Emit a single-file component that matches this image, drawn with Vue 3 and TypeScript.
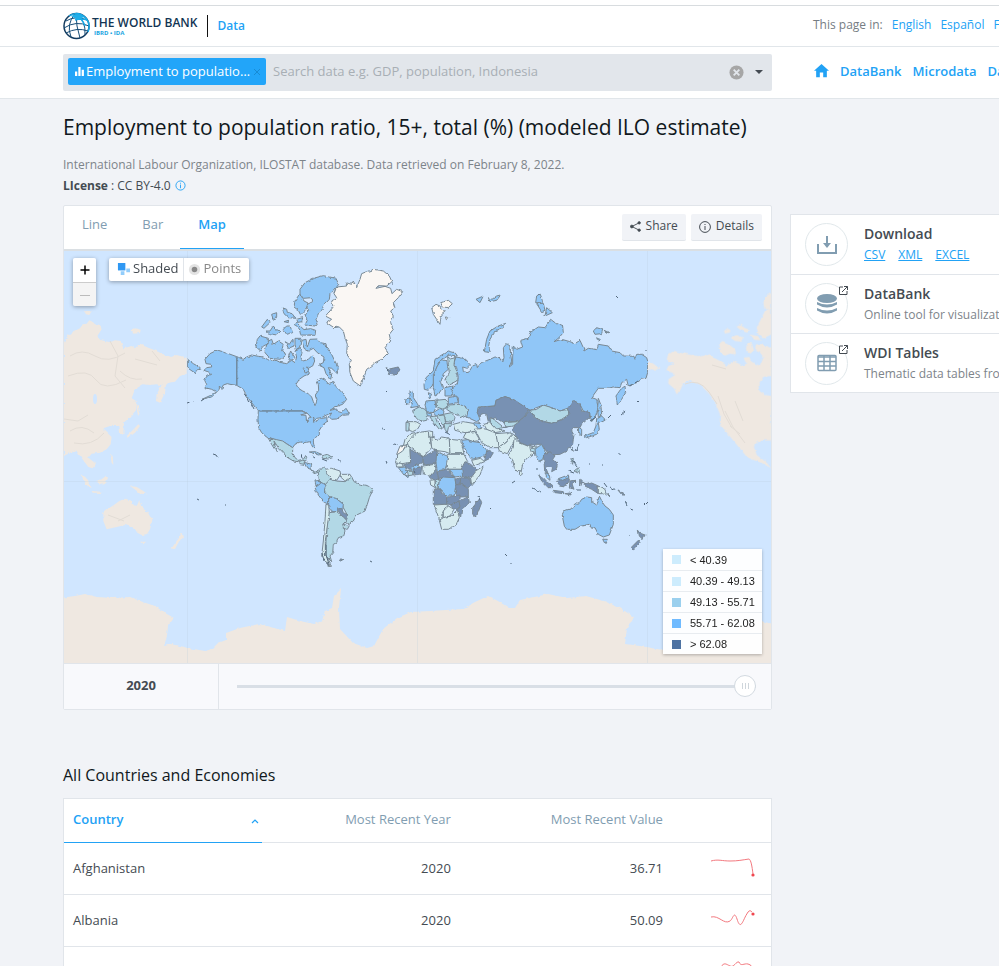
<script setup lang="ts">
import { ref } from 'vue'

type Tone = 'blue' | 'cyan' | 'pale' | 'dark' | 'none' | 'land'
type Shape = [Tone, string]
interface Sheet { id: string; at: string; shapes: Shape[] }

const year = ref(2020)
const tab = ref('Map')
const tabs = ['Line', 'Bar', 'Map']
const query = ref('')
const languages = ['English', 'Español', 'Français', 'العربية']
const sites = ['DataBank', 'Microdata', 'Data Catalog']
const formats = ['CSV', 'XML', 'EXCEL']

const legend: { tone: string; label: string }[] = [
  { tone: 'l1', label: '< 40.39' },
  { tone: 'l1', label: '40.39 - 49.13' },
  { tone: 'l2', label: '49.13 - 55.71' },
  { tone: 'l3', label: '55.71 - 62.08' },
  { tone: 'l4', label: '> 62.08' }
]

const rows = [
  { name: 'Afghanistan', year: 2020, value: '36.71', line: 'M1 7C8 5 12 7 20 7S32 6 39 5C41 6 42 12 43 20', x: 43, y: 21 },
  { name: 'Albania', year: 2020, value: '50.09', line: 'M1 11C9 9 14 19 20 15C23 13 24 4 27 13C31 26 33 13 38 6Q40 3 42 6', x: 43, y: 8 },
  { name: 'Algeria', year: 2020, value: '36.66', line: 'M11 9C14 4 16 6 20 8C24 10 26 3 29 4C31 9 34 5 38 6Q41 6 42 10', x: 43, y: 14 }
]

/* Sheets of the projected world; each is drawn at three units per map pixel. */
const backdrop: Sheet[] = [
  { id: 'west', at: 'translate(60 310) scale(.3333)', shapes: [
    ['land', '12,95 20,78 40,62 60,52 68,40 80,38 88,28 98,32 105,40 120,42 125,55 112,75 125,88 150,94 165,88 182,90 190,112 215,105 225,112 238,98 265,110 285,118 300,125 330,138 350,132 380,140 380,188 360,195 345,212 325,215 318,222 315,245 300,275 288,270 290,250 305,222 285,220 270,222 250,220 225,235 215,262 232,272 228,298 205,325 192,338 190,370 180,365 178,345 150,345 130,352 155,375 152,400 140,415 120,425 95,428 85,440 108,458 98,472 85,468 70,448 58,432 48,418 30,425 12,435'],
    ['land', '130,605 142,595 165,580 178,570 195,563 212,568 215,578 230,585 238,568 245,590 262,602 277,628 270,655 262,668 245,672 232,665 222,650 195,642 170,648 140,655 130,630'],
    ['land', '335,712 350,690 362,672 360,664 372,672 358,690 345,714'], ['land', '210,525 230,528 250,540 262,550 240,548 228,538'],
    ['land', '112,510 125,505 138,494 144,500 136,518 120,522'], ['land', '65,490 78,500 95,530 85,528 70,508'], ['land', '95,540 125,542 128,546 98,545'],
    ['land', '215,60 225,52 242,56 240,66 220,68'], ['land', '200,375 218,358 235,340 240,345 225,365 205,380'], ['land', '235,275 240,305 234,315 230,290'],
    ['land', '72,0 95,0 88,12 78,10'], ['land', '240,692 258,692 250,700'], ['land', '150,428 158,435 160,462 155,455']
  ] },
  { id: 'east', at: 'translate(600 310) scale(.3333)', shapes: [
    ['land', '200,145 205,130 222,120 240,124 265,130 300,136 330,130 345,142 365,152 380,165 400,150 430,165 450,150 480,165 490,140 514,130 514,195 490,198 475,220 478,240 495,252 514,255 514,388 490,388 470,395 462,405 470,432 500,455 514,472 490,458 465,448 440,438 430,425 405,395 378,362 360,340 360,310 352,290 340,265 325,245 300,222 270,210 250,215 242,235 230,250 222,232 205,218 205,205 225,192 215,184 198,180 205,165 220,160'],
    ['land', '358,98 368,90 385,98 405,115 408,130 390,128 375,134 362,125'], ['land', '372,60 385,50 392,62 375,68'], ['land', '392,80 410,72 430,80 425,92 405,90'],
    ['land', '410,48 425,38 432,50 446,55 442,65 425,60'], ['land', '440,98 455,96 462,120 450,128 438,115'], ['land', '468,100 488,98 514,112 514,145 490,138 480,125 465,118'],
    ['land', '470,50 480,30 495,0 514,-10 514,70 490,82 475,70'], ['land', '490,-25 500,-45 514,-55 514,-8 494,-5'], ['land', '143,150 160,158 178,172 160,180 143,172'], ['land', '430,140 448,138 455,155 438,155'],
    ['land', '452,70 475,76 482,88 462,86']
  ] }
]

const world: Sheet[] = [
  { id: 'north-america', at: 'translate(180 250) scale(.3333)', shapes: [
    ['blue', '75,325 90,308 112,297 140,306 170,317 170,403 150,400 142,398 130,402 125,412 118,405 118,415 108,425 95,438 78,442 66,445 90,434 108,422 95,415 75,410 80,400 74,388 80,376 95,370 88,364 72,358 80,350 95,348 94,340 78,338'],
    ['blue', '22,324 32,332 40,338 52,345 62,355 50,357 48,368 36,360 22,350'],
    ['blue', '170,317 190,325 200,318 215,312 235,316 250,318 262,325 275,332 285,326 300,334 320,338 335,328 345,335 350,318 345,300 360,290 366,305 362,320 370,330 385,325 392,318 400,315 404,330 398,345 385,352 388,368 372,375 358,385 348,400 355,412 368,420 385,428 395,438 400,452 405,464 411,445 406,432 416,418 415,400 410,388 424,382 436,388 445,398 462,392 466,405 480,418 490,430 500,445 488,460 465,468 450,478 470,474 475,482 485,485 498,472 508,488 490,490 470,504 455,505 448,498 455,486 440,492 425,500 410,502 398,514 402,502 392,498 380,485 365,480 235,480 225,468 215,455 200,435 190,415 170,403'],
    ['blue', '235,480 365,480 380,487 362,492 378,493 380,515 388,498 402,500 400,514 425,502 440,500 443,510 428,522 418,538 418,548 405,562 400,570 404,592 398,588 390,572 375,575 360,573 345,580 338,590 320,578 308,572 290,568 275,562 262,560 245,545 236,530 234,505'],
    ['cyan', '264,560 290,566 308,570 322,580 338,590 338,605 345,620 355,628 370,625 378,613 380,620 375,628 368,635 355,632 340,630 320,618 310,605 295,590 282,570 285,585 292,602 282,592 272,575'],
    ['cyan', '355,632 368,628 375,630 372,640 360,638'], ['blue', '372,634 395,640 392,655 380,650'], ['cyan', '392,655 402,664 418,656 422,662 402,668'],
    ['blue', '388,603 405,602 425,610 415,612 400,606'], ['cyan', '425,615 442,610 458,620 445,624 428,622'],
    ['none', '470,108 500,105 498,95 515,100 520,90 530,110 540,85 545,68 560,62 580,55 610,60 628,75 636,92 620,105 595,104 588,112 615,106 632,112 636,128 650,115 668,122 655,140 640,155 645,170 632,180 640,195 632,215 640,235 628,250 632,270 615,290 625,305 605,325 585,335 575,345 560,355 552,380 541,405 520,390 510,365 508,340 514,328 500,310 502,280 495,260 490,240 478,228 462,230 440,215 455,205 436,195 450,180 462,165 455,150 470,140 462,128'],
    ['blue', '360,115 375,95 400,82 430,74 468,82 476,100 465,115 450,130 448,145 430,165 425,180 415,188 408,205 412,215 405,225 375,222 382,208 375,190 386,178 378,162 398,152 396,140 370,142 360,130'],
    ['blue', '345,150 360,127 372,150 384,156 378,175 362,192 355,178 342,168'], ['blue', '345,220 352,217 372,236 392,233 407,238 405,253 362,252 358,234'],
    ['blue', '258,290 262,272 275,265 280,280 295,270 310,280 305,300 318,310 300,325 270,322 255,305'], ['blue', '232,265 240,255 265,262 265,278 250,285 240,298 228,288'],
    ['blue', '345,262 364,262 360,285 350,300 345,280'], ['blue', '316,272 328,280 338,265 342,285 325,292'], ['blue', '325,318 332,300 345,320 332,328'],
    ['blue', '258,240 270,240 280,225 290,238 303,240 290,252 268,248'], ['blue', '245,228 262,205 270,215 252,232'], ['blue', '307,170 320,175 322,184 336,188 348,202 325,200 312,188'],
    ['blue', '310,235 320,225 330,225 338,245 320,250'], ['blue', '275,190 290,185 290,200 278,205'], ['blue', '312,212 325,208 325,215'], ['blue', '350,205 368,200 366,212 354,214'],
    ['blue', '366,268 378,265 382,288 390,265 412,264 420,275 438,278 440,290 455,310 462,325 475,350 472,368 455,352 445,350 455,372 452,385 438,368 432,350 415,342 430,335 432,318 412,305 400,292 385,300 372,292'],
    ['blue', '368,352 382,348 388,360 376,366'], ['dark', '618,350 628,354 655,348 660,358 645,372 625,370 628,362'],
    ['blue', '676,460 678,444 690,440 690,458'], ['blue', '690,418 700,425 700,440 712,458 716,466 692,470 698,455 690,440']
  ] },
  { id: 'eurasia', at: 'translate(380 250) scale(.3333)', shapes: [
    ['blue', '228,318 250,322 272,342 262,352 248,348 250,362 265,365 278,345 290,340 292,350 304,335 330,325 345,318 358,320 368,335 372,320 370,290 380,278 390,285 392,310 395,330 388,348 398,340 398,318 400,285 410,295 428,288 422,268 445,262 450,245 475,228 495,230 512,205 525,215 548,225 550,245 535,262 522,272 545,265 570,272 585,278 600,268 610,290 612,300 625,292 650,296 655,280 685,285 695,300 720,305 730,315 762,316 765,325 770,310 785,310 800,320 803,330 803,365 798,382 785,385 770,395 745,405 740,385 725,395 720,410 700,408 680,412 655,412 635,440 650,445 655,470 645,500 635,512 628,485 610,480 600,460 580,448 568,470 540,480 490,462 450,478 430,470 400,445 375,437 348,448 345,465 295,468 292,485 300,505 290,512 260,498 265,475 240,462 235,455 235,440 215,430 218,410 232,400 235,380 230,350 222,335'],
    ['blue', '708,435 722,415 735,405 737,425 725,445 712,462'],
    ['blue', '132,400 138,380 160,360 165,325 185,312 205,300 225,305 232,315 210,312 195,320 180,330 170,350 162,375 160,400 145,418 133,415'],
    ['blue', '160,372 172,345 185,325 200,330 205,355 190,368 182,395 188,410 175,430 165,435 160,410'],
    ['cyan', '203,318 212,324 225,318 222,340 232,365 230,390 205,402 195,385 208,365 205,340'],
    ['dark', '295,470 345,465 348,448 375,437 400,445 450,478 430,500 415,512 390,512 370,515 345,500 325,512 320,490 305,488 300,498 292,485'],
    ['cyan', '450,478 470,475 490,462 515,470 540,480 562,475 570,488 545,505 515,517 480,508 462,495'],
    ['dark', '450,478 462,497 480,510 515,517 550,505 570,488 562,474 580,448 600,460 605,480 630,485 628,500 605,520 600,530 580,530 575,540 582,552 580,565 578,580 560,600 540,610 515,612 500,602 485,580 465,580 445,585 420,575 410,558 398,538 405,520 430,500'],
    ['blue', '313,302 320,265 330,240 355,225 377,217 370,230 345,240 330,265 325,290 332,305'],
    ['blue', '467,155 470,135 480,128 487,145 487,155'], ['blue', '470,158 490,157 495,178 485,182'], ['blue', '495,195 500,170 517,185'],
    ['blue', '640,240 650,230 668,236 665,248 645,250'], ['blue', '672,238 690,246 680,244'], ['blue', '650,260 660,268 654,270'],
    ['blue', '288,145 310,135 300,155'], ['blue', '325,140 336,145 350,135 362,132 350,148 330,152'],
    ['none', '155,170 168,160 180,165 185,175 196,182 184,192 180,220 170,205 160,190'], ['none', '182,155 205,148 217,158 205,170 188,168'], ['none', '195,195 206,200 200,208'],
    ['blue', '655,442 662,460 665,490 655,500 653,470'], ['blue', '650,505 665,495 675,505 655,515 658,535 650,550 620,560 612,555 640,545 648,525'], ['blue', '595,528 605,535 605,552 597,552'],
    ['cyan', '98,478 118,468 135,475 145,490 140,508 120,512 108,500'], ['pale', '80,512 108,512 122,520 112,535 98,542 88,538'], ['cyan', '78,514 88,516 86,540 78,540'],
    ['blue', '138,450 165,448 168,470 160,485 140,482 135,465'], ['cyan', '168,448 198,445 205,468 190,475 170,468'], ['blue', '145,425 155,430 148,442'],
    ['blue', '195,410 218,405 215,435 195,435'], ['blue', '205,440 230,435 235,455 205,460'], ['cyan', '205,462 240,460 265,475 262,490 240,500 235,490 215,485 200,475'],
    ['cyan', '190,490 215,485 225,500 220,515 198,512'], ['cyan', '150,498 165,495 172,515 190,530 178,535 160,512'], ['cyan', '170,495 192,492 198,518 185,518'], ['cyan', '192,518 215,518 205,530 202,545 195,535'],
    ['blue', '160,485 180,472 192,480 190,490 168,495'], ['blue', '140,485 155,488 155,496 142,494'],
    ['pale', '220,520 250,512 285,518 300,525 290,540 255,545 225,538'], ['blue', '282,515 302,518 306,532 292,530'],
    ['pale', '258,545 285,542 300,568 278,572 250,560'], ['blue', '245,568 262,566 280,572 300,575 318,595 325,605 305,618 275,625 262,605 250,585'],
    ['pale', '285,535 305,532 345,540 352,565 355,590 330,590 305,575'], ['pale', '312,520 330,515 350,530 375,540 345,545 320,535'], ['cyan', '330,500 350,512 372,530 392,525 350,534 332,515'],
    ['pale', '348,548 385,545 398,548 375,575 355,590'], ['pale', '355,590 375,575 400,550 410,560 392,590 382,608 358,600'], ['cyan', '372,515 418,512 400,525 378,528'],
    ['pale', '385,612 400,590 402,560 418,575 450,588 470,585 478,598 462,608 440,622 428,640 424,660 412,662 403,650 397,625'], ['pale', '420,662 428,668 422,674 418,670'],
    ['cyan', '450,592 465,592 466,606 454,604']
  ] },
  { id: 'africa', at: 'translate(380 400) scale(.3333)', shapes: [
    ['pale', '75,115 90,98 105,95 108,108 82,130 70,135'], ['none', '60,135 78,132 68,150 60,160 50,160'], ['pale', '82,125 110,95 148,90 150,110 155,140 130,167 85,135'],
    ['pale', '148,90 158,92 158,108 150,110'], ['pale', '152,108 175,115 185,108 208,112 210,158 195,152 165,148 155,140'], ['pale', '208,115 240,118 245,128 252,158 210,158'],
    ['pale', '48,182 50,162 68,150 80,132 90,140 92,184 66,188'], ['dark', '90,145 130,168 128,185 105,195 88,205 70,192 92,186'], ['dark', '130,168 165,148 172,155 168,188 130,192'],
    ['blue', '170,152 204,166 202,185 195,205 172,210 168,185'], ['pale', '205,160 252,160 262,180 250,205 205,205 200,185'],
    ['dark', '255,182 272,190 292,208 280,225 255,232 240,212'], ['pale', '290,208 310,195 300,222 275,252 272,232'], ['blue', '205,205 245,205 248,225 225,228'],
    ['dark', '172,212 200,205 222,228 175,232'], ['pale', '128,195 165,190 168,205 150,225 130,222'], ['dark', '148,228 168,205 176,234 158,238'], ['blue', '90,204 112,190 120,200 98,208'],
    ['pale', '48,185 66,188 70,198 50,198'], ['blue', '55,200 76,198 82,212 72,222'], ['blue', '72,220 86,226 84,230'], ['cyan', '82,208 98,208 98,222 85,224'], ['dark', '100,202 125,198 122,222 102,225'],
    ['pale', '150,238 165,236 166,260 152,252'], ['cyan', '166,236 178,234 176,260 166,262'], ['blue', '178,238 190,228 225,230 228,250 222,285 200,285 180,265 175,260'],
    ['dark', '242,230 270,232 272,250 265,262 240,248'], ['dark', '225,235 242,230 240,248 228,252'], ['dark', '228,252 245,250 265,265 265,287 240,288 226,275'], ['dark', '160,265 180,265 188,280 200,285 200,310 160,310'],
    ['dark', '200,290 222,285 240,282 240,298 215,312 200,308'], ['dark', '265,287 268,305 245,325 242,348 232,332 240,300'], ['dark', '212,312 235,300 240,315 232,326 220,322'],
    ['pale', '162,312 195,310 205,312 190,330 188,358 178,355'], ['pale', '190,330 205,315 222,325 210,345 190,350'], ['pale', '178,358 190,350 215,345 232,330 238,350 228,372 205,385 185,385'],
    ['dark', '278,320 300,292 305,305 290,345 278,340'], ['pale', '275,178 302,172 314,182 282,195'], ['dark', '320,150 328,148 340,155 330,172 314,180']
  ] },
  { id: 'south-america', at: 'translate(290 440) scale(.3333)', shapes: [
    ['cyan', '85,95 100,78 108,85 112,100 122,112 118,125 105,135 88,118'], ['pale', '105,85 125,82 150,90 152,100 140,118 120,112 110,98'], ['pale', '150,100 180,100 188,115 165,120 152,108'],
    ['blue', '75,120 90,118 92,130 78,138'], ['cyan', '102,135 120,115 140,120 165,122 185,108 192,122 212,130 235,135 248,148 238,170 232,190 225,210 200,222 190,240 178,250 165,240 172,222 160,200 155,185 140,175 120,165 105,155'],
    ['blue', '75,140 95,125 108,132 102,150 118,165 115,190 100,182 85,162'], ['blue', '116,168 138,172 160,190 158,205 140,212 125,212 116,190'], ['dark', '142,205 155,202 160,215 174,222 170,236 155,225'],
    ['pale', '108,190 116,192 118,220 112,260 106,300 106,340 122,368 105,362 95,345 100,300 105,240'],
    ['cyan', '118,215 140,212 160,228 170,238 158,250 165,270 160,285 145,290 140,305 130,310 128,335 120,345 125,362 108,345 108,300 112,255'], ['cyan', '160,248 178,254 172,265 160,262'],
    ['pale', '112,365 125,375 115,378'], ['dark', '148,358 155,354 162,354 152,360']
  ] },
  { id: 'oceania', at: 'translate(500 380) scale(.3333)', shapes: [
    ['blue', '187,400 192,390 215,382 225,368 235,370 245,355 260,348 275,350 275,362 290,372 298,345 308,365 315,375 328,385 340,402 340,430 328,462 310,468 295,460 285,440 275,442 268,430 240,436 225,445 200,445 193,435 188,410'],
    ['blue', '308,475 322,475 315,488'], ['dark', '415,447 424,458 435,462 428,475 418,465'], ['dark', '393,500 415,478 420,485 400,508'],
    ['dark', '115,280 130,290 158,320 145,320 125,300'], ['dark', '160,328 190,332 192,338 165,335'], ['dark', '170,298 190,295 205,285 208,300 195,318 178,315'], ['blue', '175,293 205,282 206,290 188,298'],
    ['blue', '135,275 148,280 150,298 140,290'], ['dark', '210,300 228,298 216,308 222,325 212,318 208,322'], ['dark', '250,305 262,310 275,306 295,315 295,338 275,325 255,315'], ['pale', '295,315 315,325 318,335 330,345 308,338 295,338'],
    ['blue', '105,205 125,190 135,210 128,235 118,240 108,225'], ['dark', '130,220 150,212 165,225 158,235 172,250 168,265 155,272 158,258 145,255 138,262 145,280 134,270 132,240'],
    ['cyan', '210,235 220,232 218,250'], ['cyan', '222,270 235,260 238,278'], ['dark', '195,338 215,336 212,342'], ['dark', '242,295 248,300 242,315'], ['dark', '352,325 375,342 366,342'], ['dark', '218,200 220,214 216,212']
  ] }
]

/* Thin strokes that stand for archipelagos too small to fill. */
const specks = 'M187 403l3-1M193 402l2-1M201 400l3-2M213 453l3 1l2 3M197 498l2 1M225 504l1 0M244 392l3 5l2 5M250 400l4 8M382 427l2 1M394 443l4 1M386 460l1 2M387 367l1 2M301 454l1 3M338 458l2 3M322 458l5 2M326 544l0 10l3 9M322 552l2 8l6 5M370 560l2 1M505 553l2 2M511 562l1 0M589 463l1 0M602 464l1 0M619 453l2 0M630 534l0 1M625 501l2 4M630 508l3 1M644 504l3-3M610 486l5 3M604 482l3 4M570 458l4 3l3 4M568 470l6 2M577 489l4 0M541 491l-8-4M537 467l0 2M392 282l1 0M539 293l0 1M630 385l8-5M646 349l0 1M638 400l1 1M573 449l0-3M414 470l1 2M626 410l-5 4M490 507l1 1M478 495l2 4M596 416l-6 4M515 480l-3 2M386 462l1 0M608 417l3-3M576 450l3-6M616 295l2 2M387 390l-1 1M315 457l-3-2M445 431l4 2M439 422l3 3M435 425l-2-3'
const relief = 'M70 355q12-8 25 0t30-3M68 375q20-8 28 4t30 0M110 340l8 15l-3 20l10 12M74 442q18 4 30-10M64 418l14 2l10-6M70 430q12-8 24 2M120 370q10 10 22 8M135 358l22 6M152 350l8 10M685 383q14-6 24 8l8 12M718 395l6 18l8 14M725 410l8 16l12 16M730 425l10 8M735 400l8 20M712 364l14 4M108 514l16 6M118 520l12-6'
</script>

<template>
  <div class="page">
    <header class="masthead">
      <div class="brand">
        <a class="logo" href="#home" aria-label="The World Bank">
          <svg class="globe" viewBox="0 0 28 28" fill="none">
            <circle cx="13.500" cy="14" r="12.500" stroke="#123a5e" stroke-width="1.500" />
            <path d="M3 9Q13 3 24 8M1 16Q13 8 26 14M3 21Q14 15 25 19M12 2Q3 12 8 25M13 2Q13 14 17 26M13 2Q23 8 22 23" stroke="#174d77" />
            <path d="M6 4Q15-2 23 6Q28 12 25 20M13 2L22 5M13 2Q20 8 22 14M12 8Q19 6 24 8" stroke="#18a9e6" stroke-width="1.500" />
            <path d="M8 4Q15 0 21 5L15 8Z" fill="#21aee8" />
          </svg>
          <span class="wordmark"><strong>THE WORLD BANK</strong><small>IBRD • IDA</small></span>
        </a>
        <a class="data-link" href="#data">Data</a>
      </div>
      <nav class="languages" aria-label="Languages">
        <span>This page in:</span>
        <a v-for="l in languages" :key="l" href="#lang">{{ l }}</a>
      </nav>
    </header>

    <div class="searchbar">
      <form class="search" @submit.prevent>
        <span class="chip">
          <svg class="bars" viewBox="0 0 10 10" fill="#fff"><path d="M0 5h2.500v5H0zM3.700 0h2.500v10H3.700zM7.400 3h2.500v7H7.400z" /></svg>
          <span class="chip-text">Employment to population ratio, 15+, total (%)</span>
          <button type="button" class="chip-x" aria-label="Remove indicator"><svg viewBox="0 0 8 8"><path d="M1 1l6 6M7 1l-6 6" stroke="#178bd5" /></svg></button>
        </span>
        <input v-model="query" class="query" aria-label="Search data" placeholder="Search data e.g. GDP, population, Indonesia" />
        <button type="button" class="clear" aria-label="Clear">
          <svg viewBox="0 0 16 16"><circle cx="8" cy="8" r="7.500" fill="#a6a6a6" /><path d="M5 5l6 6M11 5l-6 6" stroke="#e2e6eb" stroke-width="2" /></svg>
        </button>
        <button type="button" class="drop" aria-label="Open list"><svg viewBox="0 0 8 5"><path d="M0 0h8L4 4z" fill="#444b52" /></svg></button>
      </form>
      <nav class="sites" aria-label="Sites">
        <a href="#home" class="home" aria-label="Home"><svg viewBox="0 0 16 14"><path d="M8 0l8 7.200h-2.300V14H9.800V9H6.200v5H2.300V7.200H0z" fill="#22a2f5" /></svg></a>
        <a v-for="s in sites" :key="s" href="#site">{{ s }}</a>
      </nav>
    </div>

    <div class="content">
      <main>
        <h1>Employment to population ratio, 15+, total (%) (modeled ILO estimate)</h1>
        <p class="source">International Labour Organization, ILOSTAT database. Data retrieved on February 8, 2022.</p>
        <p class="license"><strong>LIcense</strong> : CC BY-4.0
          <svg class="info" viewBox="0 0 12 12" fill="none" stroke="#22a2f5"><circle cx="6" cy="6" r="5" /><path d="M6 5v4M6 3v1" /></svg>
        </p>

        <section class="panel">
          <div class="toolbar">
            <div class="tabs">
              <button v-for="t in tabs" :key="t" type="button" :class="['tab', { on: tab === t }]" @click="tab = t">{{ t }}</button>
            </div>
            <div class="actions">
              <button type="button" class="action">
                <svg viewBox="0 0 12 12" fill="#444b52" stroke="#444b52"><path d="M10 2L2 6l8 4" fill="none" /><circle cx="10" cy="2" r="1.300" /><circle cx="2" cy="6" r="1.500" /><circle cx="10" cy="10" r="1.300" /></svg>Share
              </button>
              <button type="button" class="action wide">
                <svg viewBox="0 0 12 12" fill="none" stroke="#444b52"><circle cx="6" cy="6" r="5.400" /><path d="M6 5v4M6 3v1" /></svg>Details
              </button>
            </div>
          </div>

          <div class="map">
            <svg class="world" viewBox="64 250 707 412" preserveAspectRatio="xMidYMid slice" role="img" aria-label="World map">
              <defs>
                <filter id="coast" x="0" y="0" width="1" height="1" filterUnits="objectBoundingBox">
                  <feTurbulence type="fractalNoise" baseFrequency=".22" numOctaves="2" seed="4" />
                  <feDisplacementMap in="SourceGraphic" scale="3" xChannelSelector="R" yChannelSelector="G" />
                </filter>
              </defs>
              <rect x="64" y="250" width="707" height="413" fill="#d0e6ff" />
              <g filter="url(#coast)">
                <g v-for="s in backdrop" :key="s.id" :transform="s.at">
                  <polygon v-for="(p, i) in s.shapes" :key="i" :class="p[0]" :points="p[1]" />
                </g>
                <polygon class="land" points="60,597 75,595 85,593 97,596 112,597 130,596 140,600 155,605 165,612 174,617 168,625 167,635 164,645 172,643 188,647 205,650 212,648 218,642 226,639 226,632 240,627 259,623 285,630 287,616 300,620 314,623 322,620 325,610 332,607 334,595 341,588 339,606 340,628 353,642 367,647 374,645 383,628 397,617 411,611 430,610 462,608 475,601 488,595 498,600 509,607 515,607 520,599 530,597 548,593 567,597 586,595 604,600 620,607 634,616 627,627 625,643 640,645 663,649 700,650 712,640 762,620 775,624 775,670 60,670" />
              </g>
              <path class="relief" :d="relief" />
              <ellipse cx="95" cy="398" rx="2" ry="5" fill="#d0e6ff" />
              <path class="grid" d="M187.500 250V663M417.500 250V663M647.500 250V663M64 480.500H771" />
              <g filter="url(#coast)">
                <g v-for="s in world" :key="s.id" :transform="s.at">
                  <polygon v-for="(p, i) in s.shapes" :key="i" :class="['country', p[0]]" :points="p[1]" />
                </g>
                <path class="specks" :d="specks" />
              </g>
              <path d="M237 356V384M259 410H302" stroke="#6d8ca8" />
            </svg>
            <div class="zoom">
              <button type="button" aria-label="Zoom in"><svg viewBox="0 0 10 10"><path d="M5 0.500v9M0.500 5h9" stroke="#000" stroke-width="1.500" /></svg></button>
              <button type="button" class="off" aria-label="Zoom out"><svg viewBox="0 0 10 10"><path d="M0 5.500h10" stroke="#bbb" /></svg></button>
            </div>
            <div class="modes">
              <button type="button" class="mode"><svg viewBox="0 0 14 14"><path d="M1 0h8v8H1z" fill="#2f98f3" /><path d="M10 6h4v4h-4zM4 9h4v4H4z" fill="#92cdfb" /></svg>Shaded</button>
              <button type="button" class="mode muted"><svg viewBox="0 0 14 14"><circle cx="7" cy="7" r="6" fill="#e3e3e3" /><circle cx="7" cy="7" r="3" fill="#888" /></svg>Points</button>
            </div>
            <ul class="legend">
              <li v-for="l in legend" :key="l.label"><i :class="l.tone"></i>{{ l.label }}</li>
            </ul>
          </div>

          <div class="timeline">
            <output class="year">{{ year }}</output>
            <div class="track"><input v-model.number="year" type="range" min="1991" max="2020" aria-label="Year" /></div>
          </div>
        </section>

        <h2>All Countries and Economies</h2>
        <table class="countries">
          <thead>
            <tr>
              <th class="sorted">Country<svg viewBox="0 0 8 6" fill="none"><path d="M1 5l3-3l3 3" stroke="#22a2f5" stroke-width="1.200" /></svg></th>
              <th>Most Recent Year</th><th>Most Recent Value</th><th class="trend"></th>
            </tr>
          </thead>
          <tbody>
            <tr v-for="r in rows" :key="r.name">
              <td><a href="#country">{{ r.name }}</a></td>
              <td>{{ r.year }}</td>
              <td>{{ r.value }}</td>
              <td class="trend"><svg viewBox="0 0 46 24" fill="none"><path :d="r.line" stroke="#f3797f" /><circle :cx="r.x" :cy="r.y" r="1.600" fill="#f0474f" /></svg></td>
            </tr>
          </tbody>
        </table>
      </main>

      <aside>
        <div class="card">
          <span class="disc"><svg viewBox="0 0 20 20" fill="none" stroke="#819db1" stroke-width="2"><path d="M1 9v9h18V9M10 1v9" /><path d="M6 8h8l-4 5z" fill="#819db1" stroke="none" /></svg></span>
          <div><h3>Download</h3><p class="formats"><a v-for="f in formats" :key="f" href="#file">{{ f }}</a></p></div>
        </div>
        <div class="card">
          <span class="disc"><svg viewBox="0 0 20 20" fill="#819db1"><ellipse cx="10" cy="4.500" rx="10" ry="4.500" /><path d="M0 8q10 5 20 0v2.500q-10 6-20 0zM0 14q10 5 20 0v2.500q-10 6-20 0z" /></svg>
            <svg class="out" viewBox="0 0 9 9" fill="none" stroke="#444b52"><path d="M4 1H.500v7.500H8V5M5 .500h3.500V4M8.500.500L3 6" /></svg></span>
          <div><h3>DataBank</h3><p>Online tool for visualization and analysis</p></div>
        </div>
        <div class="card">
          <span class="disc"><svg viewBox="0 0 20 20" fill="none" stroke="#819db1" stroke-width="1.500"><rect x="1" y="2.500" width="18" height="15" rx="1" /><path d="M1 4h18M1 8.500h18M1 13h18M7 3v14M13 3v14" /></svg>
            <svg class="out" viewBox="0 0 9 9" fill="none" stroke="#444b52"><path d="M4 1H.500v7.500H8V5M5 .500h3.500V4M8.500.500L3 6" /></svg></span>
          <div><h3>WDI Tables</h3><p>Thematic data tables from WDI</p></div>
        </div>
      </aside>
    </div>
  </div>
</template>

<style>
body { background: #f1f3f7; overflow-x: hidden; }
</style>

<style scoped>
* { box-sizing: border-box; }
.page { font-family: "Open Sans", sans-serif; font-size: 13px; line-height: 20px; color: #444b52; overflow: hidden; padding-top: 5px; background: linear-gradient(#fff 5px, transparent 5px); }
a { color: #22a2f5; text-decoration: none; }
button { font: inherit; border: 0; background: none; padding: 0; color: inherit; cursor: pointer; }
h1, h2, h3, p, ul { margin: 0; padding: 0; font-weight: 400; }
svg { display: block; }

.masthead, .searchbar, .content { display: grid; grid-template-columns: minmax(0, 1fr) 209px; column-gap: 18px; padding-left: 63px; }
.masthead { height: 42px; background: #fff; border-top: 1px solid #d8dcdf; border-bottom: 1px solid #e1e6ea; align-items: center; }
.brand, .logo { display: flex; align-items: center; }
.globe { width: 28px; height: 28px; }
.wordmark { display: flex; flex-direction: column; margin-left: 1px; color: #123553; }
.wordmark strong { font-size: 12px; line-height: 13px; font-weight: 600; white-space: nowrap; }
.wordmark small { font-size: 6px; line-height: 8px; font-weight: 700; color: #19a5df; margin-left: 2px; }
.data-link { border-left: 1px solid #111; margin-left: 10px; padding-left: 9px; line-height: 22px; font-size: 12px; font-weight: 600; }
.languages { display: flex; gap: 9px; padding: 0 0 2px 23px; white-space: nowrap; font-size: 12px; color: #767d83; }
.searchbar { background: #fff; height: 52px; align-items: center; border-bottom: 1px solid #e1e6ea; }
.search { display: flex; align-items: center; height: 37px; background: #e2e6eb; border-radius: 2px; padding: 0 9px 0 5px; }
.chip { display: flex; align-items: center; width: 198px; height: 27px; margin-bottom: 2px; padding: 0 5px 0 7px; border-radius: 2px; background: #22a5f9; color: #fff; }
.bars { width: 9px; height: 9px; margin-right: 2px; flex: none; }
.chip-text { flex: 1; overflow: hidden; white-space: nowrap; text-overflow: ellipsis; padding-bottom: 2px; }
.chip-x { flex: none; width: 8px; }
.query { flex: 1; min-width: 0; border: 0; outline: 0; background: none; font: inherit; padding: 0 0 3px 7px; color: #444b52; }
.query::placeholder { color: #a8afb5; opacity: 1; }
.clear { width: 15px; height: 15px; }
.drop { width: 8px; margin-left: 11px; }
.sites { display: flex; align-items: center; gap: 11px; padding: 0 0 3px 24px; white-space: nowrap; font-weight: 600; font-size: 13px; }
.sites a { flex: none; }
.home { width: 15px; }

h1 { margin-top: 13px; font-size: 21px; line-height: 30px; font-weight: 500; color: #101820; white-space: nowrap; }
.source { margin-top: 13px; font-size: 12px; color: #7d848a; }
.license { display: flex; gap: 3px; font-size: 12px; line-height: 22px; align-items: center; }
.info { width: 11px; height: 11px; margin: 0 0 2px 1px; }
.panel { margin-top: 8px; background: #fff; border: 1px solid #e1e5ea; border-radius: 2px; }
.toolbar { display: flex; justify-content: space-between; height: 45px; border-bottom: 2px solid #dadfe3; }
.tabs { display: flex; height: 43px; }
.tab { padding: 0 18px 6px; color: #819db1; border-bottom: 1px solid transparent; }
.tab + .tab { margin-left: -1px; }
.tab.on { color: #22a2f5; font-weight: 600; border-bottom-color: #22a2f5; }
.actions { display: flex; gap: 5px; padding: 8px 9px; }
.action { display: flex; align-items: center; gap: 5px; height: 27px; padding: 0 8px 3px; background: #f1f3f7; border-radius: 2px; border-bottom: 1px solid #e1e5ea; font-size: 12px; }
.action svg { width: 11px; height: 11px; margin-top: 2px; }
.action.wide svg { width: 12px; height: 12px; }
.map { position: relative; height: 413px; border-bottom: 1px solid #e1e5ea; overflow: hidden; }
.world { width: 100%; height: 100%; }
.land { fill: #efe8e1; }
.country { stroke: #778894; stroke-width: 3; stroke-linejoin: round; }
.blue { fill: #90c6f7; }
.cyan { fill: #b2d8e6; }
.pale { fill: #d6ebf0; }
.dark { fill: #7891b3; }
.none { fill: #faf7f4; }
.relief { fill: none; stroke: #e2dcd5; stroke-width: 1; }
.grid { stroke: #b9cbdc; stroke-opacity: .25; fill: none; }
.specks { fill: none; stroke: #53687c; stroke-width: 1; }
.zoom { position: absolute; left: 9px; top: 7px; width: 23px; box-shadow: 0 1px 4px #0005; border-radius: 2px; overflow: hidden; }
.zoom button { display: flex; width: 23px; height: 24px; align-items: center; justify-content: center; background: #fff; }
.zoom svg { width: 10px; height: 10px; }
.zoom .off { background: #f4f4f4; border-top: 1px solid #ccc; }
.modes { position: absolute; left: 45px; top: 7px; display: flex; height: 23px; padding: 0 8px; background: #fff; border-radius: 2px; box-shadow: 0 1px 4px #0005; }
.mode { display: flex; align-items: center; gap: 3px; padding-bottom: 3px; }
.mode svg { width: 13px; height: 13px; margin-top: 3px; }
.mode.muted { color: #888; border-left: 1px solid #e1e5ea; margin-left: 4px; padding-left: 4px; }
.legend { position: absolute; right: 9px; bottom: 9px; width: 99px; list-style: none; background: #fffffff0; box-shadow: 0 1px 3px #0004; font: 11px/20px "Liberation Sans", sans-serif; color: #222; }
.legend li { display: flex; align-items: center; height: 21px; padding-left: 9px; border-top: 1px solid #e8ecf0; }
.legend li:first-child { border-top: 0; }
.legend i { width: 9px; height: 9px; margin-right: 9px; }
.l1 { background: #cdecfd; }
.l2 { background: #9bd0ee; }
.l3 { background: #70bbff; }
.l4 { background: #4d72a2; }
.timeline { display: flex; height: 45px; background: #f8f9fc; }
.year { width: 155px; border-right: 1px solid #e1e5ea; text-align: center; font-weight: 700; line-height: 42px; }
.track { flex: 1; display: flex; align-items: center; padding: 0 15px 1px 18px; }
.track input { appearance: none; width: 100%; height: 22px; margin: 0; background: linear-gradient(#d9dfe6, #d9dfe6) center / 100% 3px no-repeat; }
.track input::-webkit-slider-thumb { appearance: none; width: 22px; height: 22px; border: 1px solid #d3dae1; border-radius: 50%; background: linear-gradient(90deg, #cfd6dc 1px, transparent 1px 3px, #cfd6dc 3px 4px, transparent 4px 6px, #cfd6dc 6px) center / 7px 6px no-repeat #fff; }

h2 { margin: 53px 0 11px; font-size: 16px; line-height: 24px; font-weight: 500; color: #101820; }
.countries { width: 100%; table-layout: fixed; border-collapse: separate; border-spacing: 0; background: #fff; border: 1px solid #e1e5ea; }
th, td { height: 52px; padding: 0 2px 2px 9px; text-align: right; border-bottom: 1px solid #e1e5ea; font-weight: 400; }
th { height: 44px; padding-bottom: 4px; color: #819db1; width: 27%; }
th:nth-child(3) { width: 30%; }
th.trend { width: 15%; }
th:first-child, td:first-child { text-align: left; width: 28%; }
th.sorted { color: #22a2f5; font-weight: 600; border-bottom-color: #22a2f5; }
.sorted svg { float: right; width: 8px; height: 6px; margin: 9px 1px 0 0; }
td a { color: #444b52; font-weight: 500; }
.trend svg { width: 46px; height: 24px; margin: 0 13px 4px auto; }

aside { margin-top: 115px; background: #fff; border: 1px solid #e1e5ea; border-right: 0; align-self: start; }
.card { display: grid; grid-template-columns: 44px 1fr; gap: 15px; align-items: center; height: 59px; padding-left: 14px; border-bottom: 1px solid #e1e5ea; white-space: nowrap; }
.card:first-child { height: 60px; }
.card:last-child { height: 58px; border-bottom: 0; }
.disc { position: relative; display: flex; width: 43px; height: 43px; align-items: center; justify-content: center; border: 1px solid #e1e8eb; border-radius: 50%; }
.disc svg { width: 20px; height: 20px; }
.disc .out { position: absolute; right: -1px; top: 2px; width: 9px; height: 9px; background: #fff; }
h3 { font-size: 14px; line-height: 20px; font-weight: 600; }
.card p { font-size: 12px; line-height: 21px; color: #7d848a; }
.formats { display: flex; gap: 13px; }
.formats a { text-decoration: underline; }
</style>
